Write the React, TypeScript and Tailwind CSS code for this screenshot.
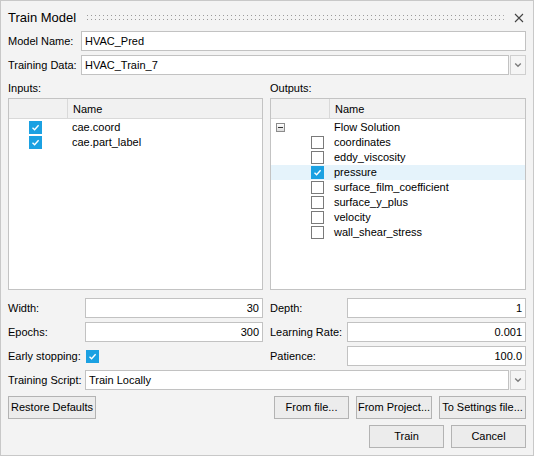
import React from "react";

const CheckMark = () => (
  <svg width="9" height="9" viewBox="0 0 9 9">
    <path d="M1.5 4.7 L3.6 6.7 L7.6 2.3" fill="none" stroke="white" strokeWidth="1.4" />
  </svg>
);

const Check = ({ checked }: { checked: boolean }) =>
  checked ? (
    <div className="w-[13px] h-[13px] bg-[#1ba1e2] flex items-center justify-center">
      <CheckMark />
    </div>
  ) : (
    <div className="w-[13px] h-[13px] bg-white border border-[#7a7a7a]" />
  );

const Field = ({ value, right }: { value: string; right?: boolean }) => (
  <div
    className={
      "flex-1 h-full bg-white border border-[#c2c2c2] flex items-center px-[3px] " +
      (right ? "justify-end" : "justify-start")
    }
  >
    {value}
  </div>
);

const DropBtn = () => (
  <div className="w-[16px] h-full ml-[1px] border border-[#cfcfcf] bg-[#f5f5f5] flex items-center justify-center">
    <svg width="8" height="6" viewBox="0 0 8 6">
      <path d="M1.2 1.5 L4 4.2 L6.8 1.5" fill="none" stroke="#7c7c7c" strokeWidth="1.4" />
    </svg>
  </div>
);

const Btn = ({ label, w }: { label: string; w: string }) => (
  <div
    className={
      "h-[23px] border border-[#b3b3b3] bg-[#ececec] flex items-center justify-center " + w
    }
  >
    {label}
  </div>
);

const outputs = [
  "coordinates",
  "eddy_viscosity",
  "pressure",
  "surface_film_coefficient",
  "surface_y_plus",
  "velocity",
  "wall_shear_stress",
];

export default function App() {
  return (
    <div className="w-[534px] h-[456px] bg-[#f3f3f3] border border-[#c8c8c8] font-['Liberation_Sans',Arial,sans-serif] text-[11px] text-black flex flex-col pl-[7px] pr-[7px] leading-none">
      {/* Title */}
      <div className="h-[30px] flex items-center pt-[3px]">
        <span className="text-[13px]">Train Model</span>
        <svg className="ml-[10px] flex-1" height="8">
          <defs>
            <pattern id="grip" width="4" height="4" patternUnits="userSpaceOnUse">
              <rect x="1" y="1" width="1" height="1" fill="#9a9a9a" />
            </pattern>
          </defs>
          <rect x="0" y="0" width="100%" height="8" fill="url(#grip)" />
        </svg>
        <svg className="ml-[10px] mr-[2px]" width="10" height="10" viewBox="0 0 10 10">
          <path d="M1 1 L9 9 M9 1 L1 9" stroke="#444" strokeWidth="1.1" />
        </svg>
      </div>

      {/* Model name */}
      <div className="h-[20px] flex items-center">
        <div className="w-[73px]">Model Name:</div>
        <Field value="HVAC_Pred" />
      </div>
      <div className="h-[20px] mt-[4px] flex items-center">
        <div className="w-[73px]">Training Data:</div>
        <Field value="HVAC_Train_7" />
        <DropBtn />
      </div>

      {/* Lists labels */}
      <div className="h-[23px] flex items-center pt-[4px]">
        <div className="w-[262px]">Inputs:</div>
        <div>Outputs:</div>
      </div>

      <div className="h-[192px] flex gap-[7px]">
        {/* Inputs list */}
        <div className="w-[255px] h-full bg-white border border-[#c3c3c3] flex flex-col">
          <div className="h-[20px] flex bg-[#f1f1f1] border-b border-[#d9d9d9] shrink-0">
            <div className="w-[59px] border-r border-[#d9d9d9]" />
            <div className="flex items-center pl-[5px] pt-[1px]">Name</div>
          </div>
          <div className="pt-[1px] flex flex-col">
            {["cae.coord", "cae.part_label"].map((n) => (
              <div key={n} className="h-[15px] flex items-center">
                <div className="w-[63px] pl-[20px]">
                  <Check checked />
                </div>
                <div>{n}</div>
              </div>
            ))}
          </div>
        </div>

        {/* Outputs list */}
        <div className="w-[256px] h-full bg-white border border-[#c3c3c3] flex flex-col">
          <div className="h-[20px] flex bg-[#f1f1f1] border-b border-[#d9d9d9] shrink-0">
            <div className="w-[59px] border-r border-[#d9d9d9]" />
            <div className="flex items-center pl-[5px] pt-[1px]">Name</div>
          </div>
          <div className="pt-[1px] flex flex-col">
            <div className="h-[15px] flex items-center">
              <div className="w-[63px] pl-[5px]">
                <div className="w-[9px] h-[9px] border border-[#8c8c8c] bg-gradient-to-b from-white to-[#dcdcdc] flex items-center justify-center">
                  <div className="w-[5px] h-[1px] bg-[#333]" />
                </div>
              </div>
              <div>Flow Solution</div>
            </div>
            {outputs.map((n) => (
              <div
                key={n}
                className={
                  "h-[15px] flex items-center " + (n === "pressure" ? "bg-[#e5f3fb]" : "")
                }
              >
                <div className="w-[63px] pl-[40px]">
                  <Check checked={n === "pressure"} />
                </div>
                <div>{n}</div>
              </div>
            ))}
          </div>
        </div>
      </div>

      {/* Params */}
      <div className="h-[20px] mt-[8px] flex items-center gap-[7px]">
        <div className="w-[255px] h-full flex items-center">
          <div className="w-[77px]">Width:</div>
          <Field value="30" right />
        </div>
        <div className="flex-1 h-full flex items-center">
          <div className="w-[77px]">Depth:</div>
          <Field value="1" right />
        </div>
      </div>
      <div className="h-[20px] mt-[4px] flex items-center gap-[7px]">
        <div className="w-[255px] h-full flex items-center">
          <div className="w-[77px]">Epochs:</div>
          <Field value="300" right />
        </div>
        <div className="flex-1 h-full flex items-center">
          <div className="w-[77px]">Learning Rate:</div>
          <Field value="0.001" right />
        </div>
      </div>
      <div className="h-[20px] mt-[4px] flex items-center gap-[7px]">
        <div className="w-[255px] h-full flex items-center">
          <div className="w-[78px]">Early stopping:</div>
          <Check checked />
        </div>
        <div className="flex-1 h-full flex items-center">
          <div className="w-[77px]">Patience:</div>
          <Field value="100.0" right />
        </div>
      </div>
      <div className="h-[20px] mt-[4px] flex items-center">
        <div className="w-[77px]">Training Script:</div>
        <Field value="Train Locally" />
        <DropBtn />
      </div>

      {/* Buttons */}
      <div className="mt-[6px] flex items-center">
        <Btn label="Restore Defaults" w="w-[88px]" />
        <div className="flex-1" />
        <div className="flex gap-[7px]">
          <Btn label="From file..." w="w-[75px]" />
          <Btn label="From Project..." w="w-[76px]" />
          <Btn label="To Settings file..." w="w-[87px]" />
        </div>
      </div>
      <div className="mt-[6px] flex justify-end gap-[7px]">
        <Btn label="Train" w="w-[75px]" />
        <Btn label="Cancel" w="w-[75px]" />
      </div>
    </div>
  );
}
